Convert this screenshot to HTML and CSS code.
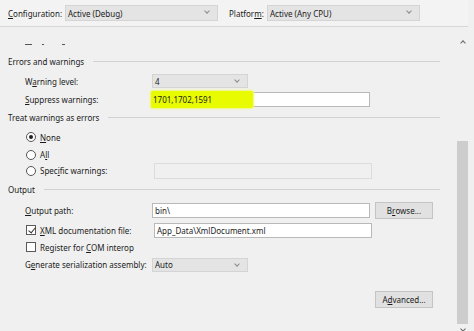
FILE: index.html
```html
<!DOCTYPE html>
<html lang="en">
<head>
    <meta charset="UTF-8">
    <title>Build Properties</title>
    <link rel="stylesheet" href="styles.css">
</head>
<body>
    <div class="topbar">
        <span class="label"><u>C</u>onfiguration:</span>
        <div class="combo wide">Active (Debug)<span class="chev"></span></div>
        <span class="label plat">Platfor<u>m</u>:</span>
        <div class="combo wide">Active (Any CPU)<span class="chev"></span></div>
    </div>
    <div class="main">
        <div class="content">
            <div class="fragment"><span class="f1"></span><span class="f2"></span><span class="f3"></span></div>

            <div class="head">Errors and warnings</div>
            <div class="row first">
                <span class="lbl">W<u>a</u>rning level:</span>
                <div class="combo">4<span class="chev"></span></div>
            </div>
            <div class="row short-row">
                <span class="lbl"><u>S</u>uppress warnings:</span>
                <div class="text long">
                    <span class="mark">1701,1702,1591</span>
                </div>
            </div>

            <div class="head">Treat warnings as errors</div>
            <div class="row first">
                <span class="radio on"></span><span><u>N</u>one</span>
            </div>
            <div class="row thin">
                <span class="radio"></span><span>A<u>l</u>l</span>
            </div>
            <div class="row tight">
                <span class="radio"></span><span class="lbl short">Spec<u>i</u>fic warnings:</span>
                <div class="text long disabled"></div>
            </div>

            <div class="head">Output</div>
            <div class="row tall">
                <span class="lbl"><u>O</u>utput path:</span>
                <div class="text long">bin\</div>
                <div class="button">B<u>r</u>owse...</div>
            </div>
            <div class="row short-row">
                <span class="check on"></span><span class="lbl short"><u>X</u>ML documentation file:</span>
                <div class="text long">App_Data\XmlDocument.xml</div>
            </div>
            <div class="row">
                <span class="check"></span><span>Register for <u>C</u>OM interop</span>
            </div>
            <div class="row tight">
                <span class="lbl">G<u>e</u>nerate serialization assembly:</span>
                <div class="combo">Auto<span class="chev"></span></div>
            </div>
            <div class="actions">
                <div class="button">A<u>d</u>vanced...</div>
            </div>
        </div>
        <div class="scrollbar">
            <span class="arrow up"></span>
            <div class="track"><div class="thumb"></div></div>
            <span class="arrow down"></span>
        </div>
    </div>
</body>
</html>
```

FILE: styles.css
```css
html, body {
    margin: 0;
    height: 100%;
}

body {
    font-family: "Noto Sans", "Open Sans", sans-serif;
    font-size: 8px;
    color: #1b1b1b;
    background: #f0f0f0;
    overflow: hidden;
    white-space: nowrap;
}

u {
    text-decoration-thickness: 1px;
    text-underline-offset: 1px;
}

.topbar {
    display: flex;
    align-items: center;
    height: 26px;
    padding-left: 8px;
    border-bottom: 1px solid #d7d7d7;
    width: 460px;
    background: #f3f3f3;
}

.topbar .label {
    width: 57px;
}

.topbar .plat {
    width: 38px;
    margin-left: 11px;
}

.combo {
    position: relative;
    display: flex;
    align-items: center;
    box-sizing: border-box;
    width: 96px;
    height: 14px;
    padding-left: 2px;
    background: #e4e4e4;
    border: 1px solid #d4d4d4;
}

.combo.wide {
    width: 153px;
    height: 16px;
}

.chev {
    position: absolute;
    right: 8px;
    top: 3px;
    width: 3px;
    height: 3px;
    border-right: 1px solid #8a8a8a;
    border-bottom: 1px solid #8a8a8a;
    transform: rotate(45deg);
}

.main {
    display: flex;
    height: 304px;
}

.content {
    width: 440px;
    padding-top: 10px;
}

.fragment {
    display: flex;
    align-items: center;
    gap: 10px;
    height: 14px;
    padding-left: 25px;
}

.fragment span {
    height: 1px;
    background: #555;
}

.f1 { width: 7px; }
.f2 { width: 2px; }
.f3 { width: 3px; margin-left: 8px; }

.head {
    display: flex;
    align-items: center;
    gap: 9px;
    height: 20px;
    padding-left: 8px;
}

.head::after {
    content: "";
    flex: 1;
    height: 1px;
    background: #d2d2d2;
}

.row {
    display: flex;
    align-items: center;
    height: 18px;
    padding-left: 25px;
}

.row.first {
    height: 20px;
}

.row.short-row {
    height: 16px;
}

.row.thin {
    height: 15px;
}

.row.tight {
    height: 17px;
}

.row.tall {
    height: 23px;
}

.lbl {
    width: 127px;
    flex: none;
}

.lbl.short {
    width: 114px;
}

.text {
    position: relative;
    display: flex;
    align-items: center;
    box-sizing: border-box;
    height: 15px;
    padding-left: 2px;
    background: #fff;
    border: 1px solid #b9b9b9;
}

.text.long {
    width: 218px;
}

.text.disabled {
    height: 16px;
    background: #f0f0f0;
    border-color: #dcdcdc;
}

.mark {
    position: absolute;
    left: -2px;
    top: -2px;
    width: 102px;
    height: 17px;
    display: flex;
    align-items: center;
    padding-left: 2px;
    box-sizing: border-box;
    background: #e8fb00;
    border-radius: 2px;
    box-shadow: 0 0 2px 1px #eef97a;
}

.radio, .check {
    flex: none;
    box-sizing: border-box;
    width: 10px;
    height: 10px;
    margin-right: 4px;
    margin-left: 1px;
    border: 1px solid #555;
    background: #fff;
}

.radio {
    border-radius: 50%;
    position: relative;
}

.radio.on::after {
    content: "";
    position: absolute;
    left: 2px;
    top: 2px;
    width: 4px;
    height: 4px;
    border-radius: 50%;
    background: #222;
}

.check {
    position: relative;
    border-color: #5a5a5a;
}

.check.on::after {
    content: "";
    position: absolute;
    left: 2.5px;
    top: 0;
    width: 3px;
    height: 6px;
    border-right: 1px solid #333;
    border-bottom: 1px solid #333;
    transform: rotate(40deg);
}

.button {
    display: flex;
    align-items: center;
    justify-content: center;
    box-sizing: border-box;
    width: 58px;
    height: 17px;
    margin-left: 5px;
    background: #e1e1e1;
    border: 1px solid #c4c4c4;
}

.actions {
    display: flex;
    justify-content: flex-end;
    padding-top: 18px;
    padding-right: 7px;
}

.scrollbar {
    display: flex;
    flex-direction: column;
    align-items: center;
    width: 11px;
    margin-left: 17px;
    padding-top: 8px;
    background: #f0f0f0;
}

.arrow {
    width: 3px;
    height: 3px;
    border-left: 1px solid #666;
    border-top: 1px solid #666;
    transform: rotate(45deg);
    margin: 6px 0 4px;
}

.arrow.down {
    transform: rotate(225deg);
    margin: 3px 0 0;
}

.track {
    flex: 1;
    width: 11px;
    display: flex;
    flex-direction: column;
    justify-content: flex-end;
}

.thumb {
    height: 183px;
    background: #cdcdcd;
}
```
